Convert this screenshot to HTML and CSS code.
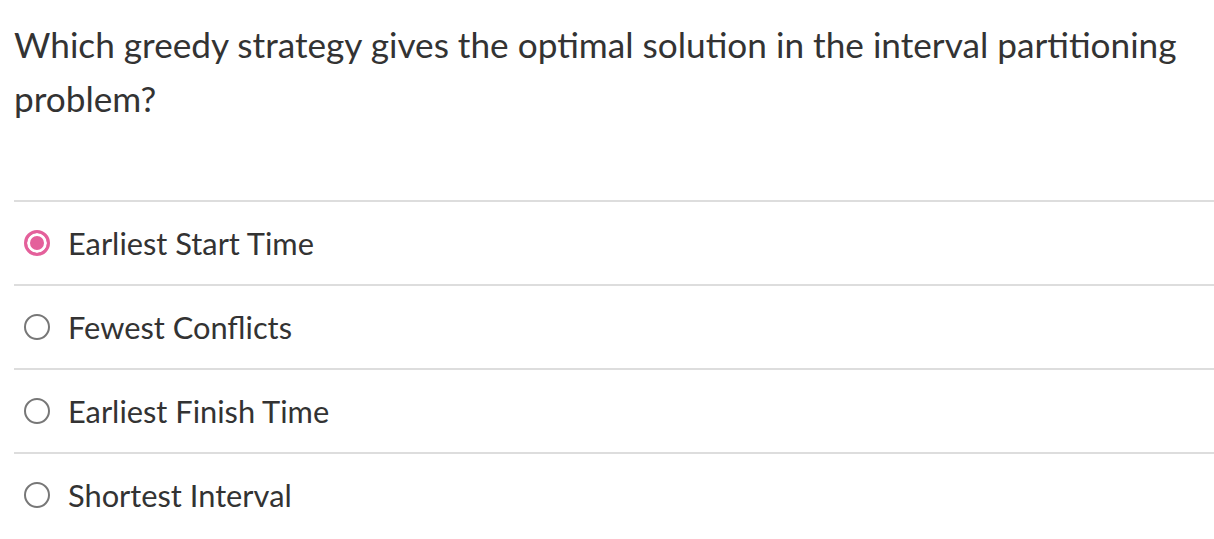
FILE: index.html
```html
<!DOCTYPE html>
<html lang="en">
<head>
    <meta charset="UTF-8">
    <title>Quiz question</title>
    <link rel="stylesheet" href="styles.css">
</head>
<body>
    <div class="question">
        <p class="question-text">Which greedy strategy gives the optimal solution in the interval partitioning problem?</p>
        <div class="answers">
            <label class="answer">
                <span class="radio checked"></span>
                <span class="answer-text">Earliest Start Time</span>
            </label>
            <label class="answer">
                <span class="radio"></span>
                <span class="answer-text">Fewest Conflicts</span>
            </label>
            <label class="answer">
                <span class="radio"></span>
                <span class="answer-text">Earliest Finish Time</span>
            </label>
            <label class="answer">
                <span class="radio"></span>
                <span class="answer-text">Shortest Interval</span>
            </label>
        </div>
    </div>
</body>
</html>
```
FILE: styles.css
```css
* {
    margin: 0;
    padding: 0;
    box-sizing: border-box;
}
body {
    background-color: #ffffff;
    color: #333333;
    font-family: Lato, 'Liberation Sans', sans-serif;
}
.question {
    padding-left: 14px;
}
/* Question */
.question-text {
    font-size: 35.2px;
    line-height: 54px;
    padding-top: 17px;
    padding-right: 20px;
    margin-bottom: 75px;
}
/* Answers */
.answer {
    display: flex;
    align-items: center;
    gap: 18px;
    height: 84px;
    border-top: 2px solid #dddddd;
    padding-left: 10px;
    font-size: 30.8px;
}
.radio {
    width: 26px;
    height: 26px;
    border-radius: 50%;
    border: 2px solid #777777;
    flex-shrink: 0;
}
.radio.checked {
    border: 3px solid #e4609b;
    background-color: #e4609b;
    box-shadow: inset 0 0 0 3px #ffffff;
}
```
